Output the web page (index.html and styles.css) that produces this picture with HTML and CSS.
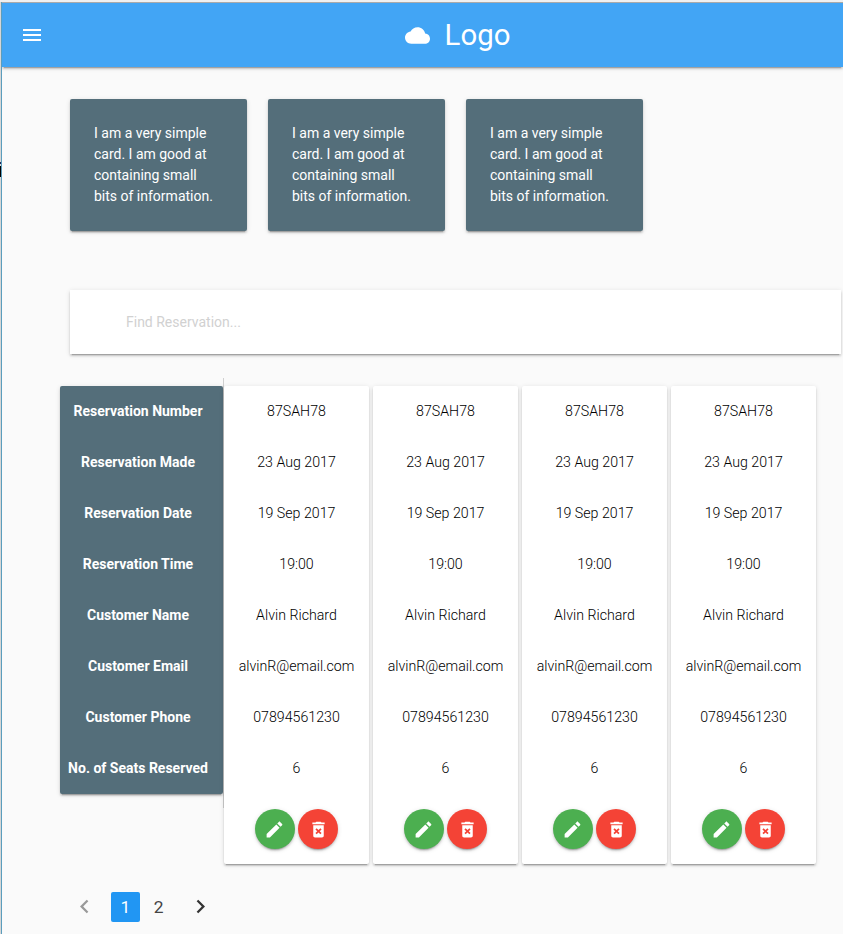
FILE: index.html
```html
<!DOCTYPE html>
<html lang="en">
<head>
    <meta charset="UTF-8">
    <meta name="viewport" content="width=device-width, initial-scale=1.0">
    <title>Reservations</title>
    <link rel="stylesheet" href="styles.css">
</head>
<body>
    <!-- shared icons -->
    <svg class="icon-defs">
        <symbol id="icon-menu" viewBox="0 0 24 24"><path d="M3 18h18v-2H3v2zm0-5h18v-2H3v2zm0-7v2h18V6H3z"/></symbol>
        <symbol id="icon-cloud" viewBox="0 0 24 24"><path d="M19.35 10.04C18.67 6.59 15.64 4 12 4 9.11 4 6.6 5.64 5.35 8.04 2.34 8.36 0 10.91 0 14c0 3.31 2.69 6 6 6h13c2.76 0 5-2.24 5-5 0-2.64-2.05-4.78-4.65-4.96z"/></symbol>
        <symbol id="icon-edit" viewBox="0 0 24 24"><path d="M3 17.25V21h3.75L17.81 9.94l-3.75-3.75L3 17.25zM20.71 7.04c.39-.39.39-1.02 0-1.41l-2.34-2.34c-.39-.39-1.02-.39-1.41 0l-1.83 1.83 3.75 3.75 1.83-1.83z"/></symbol>
        <symbol id="icon-delete" viewBox="0 0 24 24"><path d="M6 19c0 1.1.9 2 2 2h8c1.1 0 2-.9 2-2V7H6v12zm2.46-7.12l1.41-1.41L12 12.59l2.12-2.12 1.41 1.41L13.41 14l2.12 2.12-1.41 1.41L12 15.41l-2.12 2.12-1.41-1.41L10.59 14l-2.13-2.12zM15.5 4l-1-1h-5l-1 1H5v2h14V4z"/></symbol>
        <symbol id="icon-left" viewBox="0 0 24 24"><path d="M15.41 7.41L14 6l-6 6 6 6 1.41-1.41L10.83 12z"/></symbol>
        <symbol id="icon-right" viewBox="0 0 24 24"><path d="M10 6L8.59 7.41 13.17 12l-4.58 4.59L10 18l6-6z"/></symbol>
    </svg>

    <!-- sliver of the window behind the left edge -->
    <div class="edge"></div>

    <nav class="navbar">
        <a href="#" class="menu-btn"><svg><use href="#icon-menu"/></svg></a>
        <a href="#" class="brand-logo"><svg><use href="#icon-cloud"/></svg>Logo</a>
    </nav>

    <main class="container">
        <div class="cards">
            <div class="card-panel">I am a very simple card. I am good at containing small bits of information.</div>
            <div class="card-panel">I am a very simple card. I am good at containing small bits of information.</div>
            <div class="card-panel">I am a very simple card. I am good at containing small bits of information.</div>
        </div>

        <form class="search">
            <input type="text" placeholder="Find Reservation...">
        </form>

        <div class="reservations">
            <div class="headings">
                <ul class="heading-list">
                    <li>Reservation Number</li>
                    <li>Reservation Made</li>
                    <li>Reservation Date</li>
                    <li>Reservation Time</li>
                    <li>Customer Name</li>
                    <li>Customer Email</li>
                    <li>Customer Phone</li>
                    <li>No. of Seats Reserved</li>
                </ul>
            </div>
            <div class="records" id="records">
                <!-- Reservation columns will be populated here -->
            </div>
        </div>

        <ul class="pagination">
            <li class="disabled"><a href="#"><svg><use href="#icon-left"/></svg></a></li>
            <li class="active"><a href="#">1</a></li>
            <li><a href="#">2</a></li>
            <li class="next"><a href="#"><svg><use href="#icon-right"/></svg></a></li>
        </ul>
    </main>

    <script>
        const reservation = ['87SAH78', '23 Aug 2017', '19 Sep 2017', '19:00', 'Alvin Richard', 'alvinR@email.com', '07894561230', '6'];
        const records = document.getElementById('records');

        for (let i = 0; i < 4; i++) {
            const column = document.createElement('div');
            column.className = 'record';
            column.innerHTML = `
                <ul>${reservation.map(value => `<li>${value}</li>`).join('')}</ul>
                <div class="actions">
                    <button class="btn edit-btn" aria-label="Edit"><svg><use href="#icon-edit"/></svg></button>
                    <button class="btn delete-btn" aria-label="Delete"><svg><use href="#icon-delete"/></svg></button>
                </div>
            `;
            records.appendChild(column);
        }
    </script>
</body>
</html>
```

FILE: styles.css
```css
* {
    box-sizing: border-box;
}
html {
    overflow: hidden;
}
body {
    position: relative;
    margin: 0;
    height: 934px;
    overflow: hidden;
    padding-left: 2px;
    border-top: 2px solid #f0f0f0;
    background-color: #fafafa;
    font-family: Roboto, sans-serif;
    font-size: 14.5px;
    line-height: 1.5;
    color: rgba(0, 0, 0, 0.87);
}
ul {
    list-style: none;
    margin: 0;
    padding: 0;
}
a {
    color: inherit;
    text-decoration: none;
}
svg {
    display: block;
    fill: currentColor;
}
.icon-defs {
    display: none;
}
.edge {
    position: absolute;
    top: -2px;
    left: 0;
    z-index: 1;
    width: 2px;
    height: 934px;
    border-right: 1px solid #5b9dbd;
    background: linear-gradient(#000, #000) 0 166px / 1px 11px no-repeat, linear-gradient(#1c2c5c, #1c2c5c) 0 162px / 1px 2px no-repeat, #d6d6d6;
}
.navbar,
.card-panel,
.search,
.heading-list,
.record,
.btn {
    box-shadow: 0 2px 2px 0 rgba(0, 0, 0, 0.14), 0 1px 5px 0 rgba(0, 0, 0, 0.12), 0 3px 1px -2px rgba(0, 0, 0, 0.2);
}
.navbar {
    display: grid;
    grid-template-columns: 60px 1fr 48px;
    align-items: center;
    height: 65px;
    border-top: 1px solid #aaa;
    background-color: #42a5f5;
    color: #fff;
}
.menu-btn svg {
    width: 24px;
    height: 24px;
    margin-left: 18px;
}
.brand-logo {
    display: flex;
    justify-content: center;
    align-items: center;
    gap: 14.5px;
    padding-left: 58.5px;
    font-size: 29.4px;
    line-height: 64px;
}
.brand-logo svg {
    width: 25px;
    height: 25px;
}
.container {
    padding: 32px 0 0 58px;
}
.cards {
    display: flex;
    gap: 21px;
    padding-left: 10px;
}
.card-panel {
    width: 177px;
    height: 132px;
    padding: 24px;
    border-radius: 2px;
    background-color: #546e7a;
    color: #fff;
    font-size: 14px;
    line-height: 21px;
}
.search {
    width: 771px;
    height: 64px;
    margin: 59px 0 32px 10px;
    padding-left: 56px;
    background-color: #fff;
}
.search input {
    width: 100%;
    height: 64px;
    padding: 0;
    border: none;
    outline: none;
    background: none;
    font: inherit;
    font-size: 14px;
}
.search input::placeholder {
    color: #d1d1d1;
}
.reservations {
    display: flex;
    align-items: flex-start;
}
.headings {
    height: 430px;
    margin-top: -8px;
    margin-bottom: -8px;
    padding-top: 8px;
    border-right: 1px solid #d0d0d0;
}
.heading-list {
    width: 163px;
    height: 408px;
    padding-right: 7px;
    border-radius: 2px;
    background-color: #546e7a;
    color: #fff;
    font-size: 14px;
    font-weight: 700;
}
.reservations li {
    height: 51px;
    line-height: 51px;
    text-align: center;
    white-space: nowrap;
}
.records {
    display: flex;
    gap: 4px;
}
.record {
    width: 145px;
    height: 478px;
    border-radius: 2px;
    background-color: #fff;
    font-size: 14.2px;
    font-weight: 300;
    color: #000;
}
.actions {
    display: flex;
    justify-content: center;
    gap: 3px;
    padding-top: 15px;
}
.btn {
    display: flex;
    justify-content: center;
    align-items: center;
    width: 40px;
    height: 40px;
    padding: 0;
    border: none;
    border-radius: 50%;
    color: #fff;
    cursor: pointer;
}
.btn svg {
    width: 21px;
    height: 21px;
}
.edit-btn {
    background-color: #4caf50;
}
.edit-btn svg {
    margin-right: 1px;
}
.delete-btn {
    background-color: #f44336;
}
.pagination {
    display: flex;
    align-items: center;
    height: 30px;
    margin: 28px 0 0 11px;
    color: #444;
    font-size: 17.4px;
}
.pagination li {
    height: 30px;
    line-height: 30px;
    border-radius: 2px;
    text-align: center;
}
.pagination a {
    display: block;
    padding: 0 9.5px;
}
.pagination svg {
    width: 27px;
    height: 27px;
    margin-top: 1px;
}
.pagination .disabled a {
    padding: 0;
    color: #999;
}
.pagination .active {
    margin: 0 4.5px 0 13px;
    background-color: #2196f3;
    color: #fff;
}
.pagination .next a {
    padding: 0 14px;
    color: #333;
}
```
